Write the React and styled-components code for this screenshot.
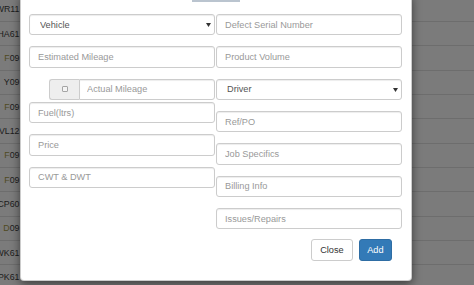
import React from "react";
import styled, { createGlobalStyle } from "styled-components";

const GlobalStyle = createGlobalStyle`
  html, body {
    margin: 0;
    padding: 0;
  }
  body {
    background: #7b7b7b;
    font-family: "Liberation Sans", Arial, sans-serif;
  }
`;

const rows = [
  { id: 1, lead: "KW", code: "R11" },
  { id: 2, lead: "KH", code: "A61" },
  { id: 3, lead: "", code: "F09", mark: true },
  { id: 4, lead: "", code: "Y09" },
  { id: 5, lead: "", code: "F09", mark: true },
  { id: 6, lead: "KV", code: "L12" },
  { id: 7, lead: "", code: "F09", mark: true },
  { id: 8, lead: "", code: "F09", mark: true },
  { id: 9, lead: "KC", code: "P60" },
  { id: 10, lead: "", code: "D09", mark: true },
  { id: 11, lead: "KW", code: "K61" },
  { id: 12, lead: "KP", code: "K61" },
];

const Caret = () => (
  <CaretIcon width="5" height="4" viewBox="0 0 5 4">
    <polygon points="0,0 5,0 2.5,4" fill="#333" />
  </CaretIcon>
);

const App = () => {
  return (
    <Page>
      <GlobalStyle />
      <Table>
        {rows.map((row) => (
          <Row key={row.id}>
            <Cell>
              {row.lead}
              {row.mark ? <Mark>{row.code[0]}</Mark> : row.code[0]}
              {row.code.slice(1)}
            </Cell>
          </Row>
        ))}
      </Table>

      <Modal>
        <Header>
          <Handle />
        </Header>
        <Form>
          <Column>
            <Field>
              <SelectWrap>
                <Select defaultValue="">
                  <option value="">Vehicle</option>
                </Select>
                <Caret />
              </SelectWrap>
            </Field>
            <Field>
              <Input placeholder="Estimated Mileage" />
            </Field>
            <Field $tight>
              <InputGroup>
                <Addon>
                  <Check type="checkbox" />
                </Addon>
                <Input $grouped placeholder="Actual Mileage" />
              </InputGroup>
            </Field>
            <Field>
              <Input placeholder="Fuel(ltrs)" />
            </Field>
            <Field>
              <Input placeholder="Price" />
            </Field>
            <Field>
              <Input placeholder="CWT & DWT" />
            </Field>
          </Column>
          <Column>
            <Field>
              <Input placeholder="Defect Serial Number" />
            </Field>
            <Field>
              <Input placeholder="Product Volume" />
            </Field>
            <Field>
              <SelectWrap>
                <Select defaultValue="">
                  <option value="">Driver</option>
                </Select>
                <Caret />
              </SelectWrap>
            </Field>
            <Field>
              <Input placeholder="Ref/PO" />
            </Field>
            <Field>
              <Input placeholder="Job Specifics" />
            </Field>
            <Field>
              <Input placeholder="Billing Info" />
            </Field>
            <Field $last>
              <Input placeholder="Issues/Repairs" />
            </Field>
          </Column>
        </Form>
        <Footer>
          <Button type="button">Close</Button>
          <Button type="button" $primary>
            Add
          </Button>
        </Footer>
      </Modal>
    </Page>
  );
};

const Page = styled.div`
  position: relative;
  width: 474px;
  height: 285px;
  overflow: hidden;
  background: #7b7b7b;
`;

const Table = styled.div`
  display: flex;
  flex-direction: column;
  margin-top: -2.4px;
`;

const Row = styled.div`
  display: flex;
  align-items: center;
  height: 24.33px;
  flex-shrink: 0;
  box-sizing: border-box;
  border-bottom: 1px solid #6d6d6d;
`;

const Cell = styled.div`
  display: flex;
  justify-content: flex-end;
  width: 19.5px;
  overflow: hidden;
  white-space: nowrap;
  font-size: 8.8px;
  color: #1c1c1c;
`;

const Mark = styled.span`
  color: #4f4a1e;
`;

const Modal = styled.div`
  position: absolute;
  left: 20px;
  top: -6px;
  width: 392px;
  box-sizing: border-box;
  background: #fff;
  border: 1px solid rgba(0, 0, 0, 0.2);
  border-radius: 4px;
  box-shadow: 0 3px 10px rgba(0, 0, 0, 0.5);
  padding: 0 9px 19px 8px;
`;

const Header = styled.div`
  display: flex;
  justify-content: center;
  margin-right: -1px;
`;

const Handle = styled.div`
  width: 48px;
  height: 7.3px;
  background: #bac4cf;
`;

const Form = styled.div`
  display: grid;
  grid-template-columns: 186px 186px;
  column-gap: 1px;
  margin-top: 11.7px;
`;

const Column = styled.div`
  display: flex;
  flex-direction: column;
`;

const Field = styled.div`
  margin-bottom: ${({ $tight, $last }) =>
    $last ? "0" : $tight ? "1.83px" : "10.83px"};
`;

const Input = styled.input`
  display: block;
  width: 100%;
  height: 21.5px;
  box-sizing: border-box;
  margin: 0;
  padding: 0 ${({ $grouped }) => ($grouped ? "7px" : "8px")};
  border: 1px solid #ccc;
  border-radius: ${({ $grouped }) => ($grouped ? "0 3px 3px 0" : "3px")};
  box-shadow: inset 0 1px 1px rgba(0, 0, 0, 0.075);
  background: #fff;
  font-family: "Liberation Sans", Arial, sans-serif;
  font-size: 9.2px;
  color: #555;
  outline: none;

  &::placeholder {
    color: #999;
  }
`;

const SelectWrap = styled.div`
  position: relative;
`;

const Select = styled.select`
  display: block;
  width: 100%;
  height: 21.5px;
  box-sizing: border-box;
  margin: 0;
  padding: 0 0 0 10px;
  border: 1px solid #ccc;
  border-radius: 3px;
  box-shadow: inset 0 1px 1px rgba(0, 0, 0, 0.075);
  background: #fff;
  appearance: none;
  -webkit-appearance: none;
  font-family: "Liberation Sans", Arial, sans-serif;
  font-size: 9.2px;
  color: #555;
  outline: none;
`;

const CaretIcon = styled.svg`
  position: absolute;
  right: 4px;
  top: 9px;
  pointer-events: none;
`;

const InputGroup = styled.div`
  display: flex;
  margin-left: 20px;
  height: 21.5px;
`;

const Addon = styled.div`
  display: flex;
  align-items: center;
  justify-content: center;
  flex: 0 0 30px;
  box-sizing: border-box;
  background: #eee;
  border: 1px solid #ccc;
  border-right: 0;
  border-radius: 3px 0 0 3px;
`;

const Check = styled.input`
  appearance: none;
  -webkit-appearance: none;
  width: 6px;
  height: 6px;
  margin: 0;
  box-sizing: border-box;
  border: 1px solid #a5a5a5;
  border-radius: 1px;
  background: #f4f4f4;
`;

const Footer = styled.div`
  display: flex;
  justify-content: flex-end;
  gap: 6px;
  margin-top: 9.5px;
  padding-right: 10px;
`;

const Button = styled.button`
  height: 22px;
  box-sizing: border-box;
  margin: 0;
  padding: 0 ${({ $primary }) => ($primary ? "7.5px" : "8px")};
  border: 1px solid ${({ $primary }) => ($primary ? "#2e6da4" : "#ccc")};
  border-radius: 3px;
  background: ${({ $primary }) => ($primary ? "#337ab7" : "#fff")};
  color: ${({ $primary }) => ($primary ? "#fff" : "#333")};
  font-family: "Liberation Sans", Arial, sans-serif;
  font-size: 9.2px;
  cursor: pointer;
`;

export default App;
